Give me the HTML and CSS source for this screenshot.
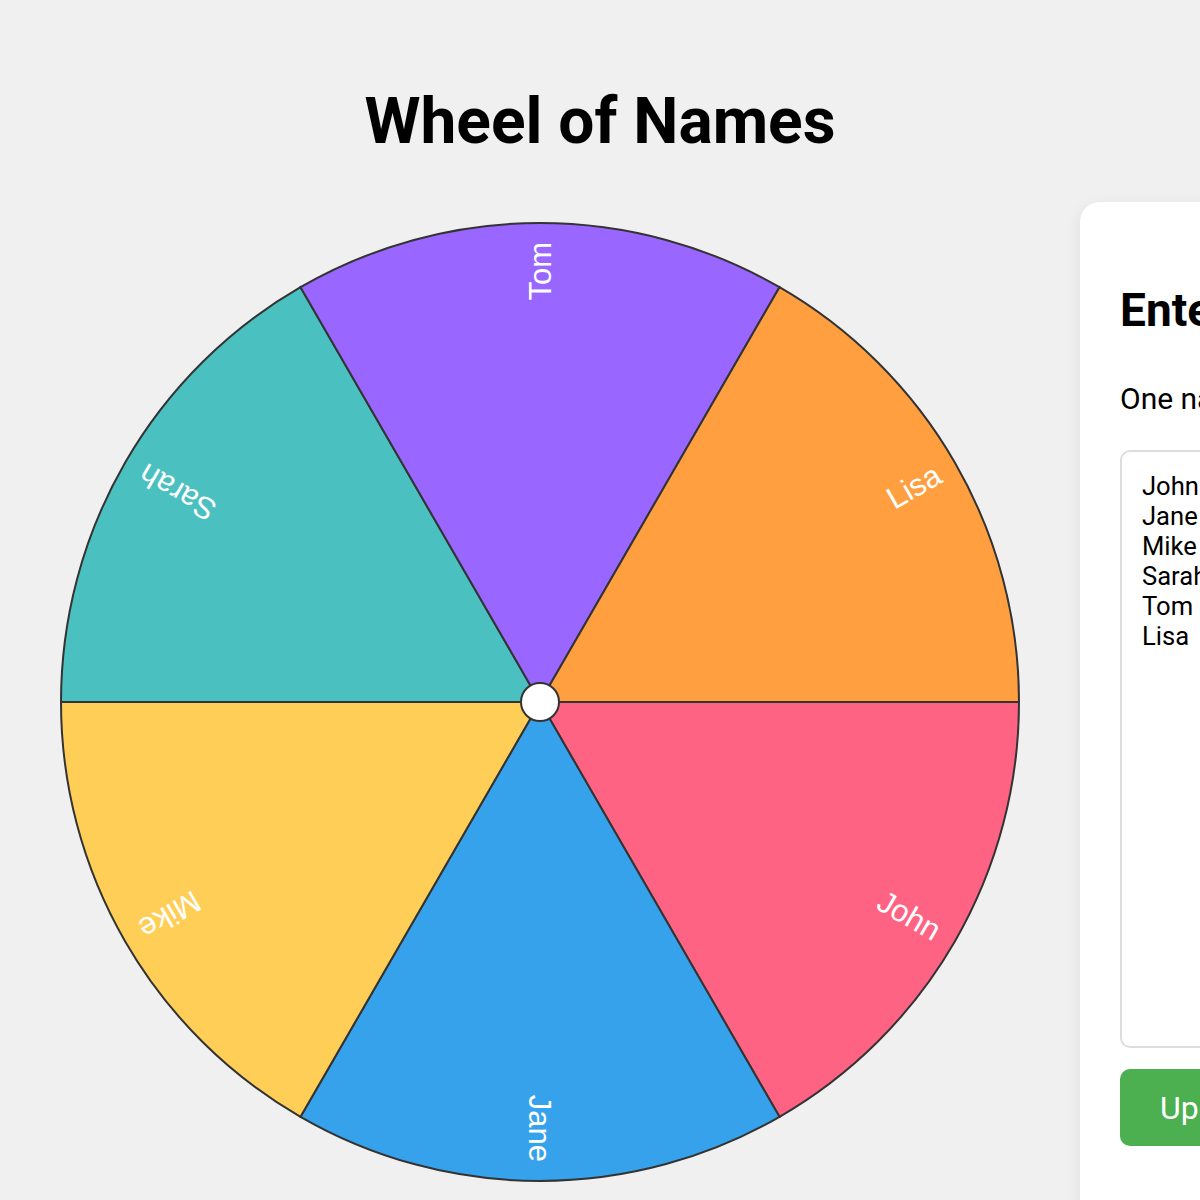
FILE: index.html
```html
<!DOCTYPE html>
<html lang="en">
<head>
    <meta charset="UTF-8">
    <meta name="viewport" content="width=device-width, initial-scale=1.0">
    <title>Wheel of Names</title>
    <link rel="stylesheet" href="styles.css">
</head>
<body>
    <div class="page">
        <h1>Wheel of Names</h1>
        <div class="main-row">
            <div class="wheel-box">
                <!-- wheel drawn as svg, 6 slices of 60 degrees starting at 3 o'clock -->
                <svg class="wheel" width="960" height="960" viewBox="0 0 960 960">
                    <g transform="translate(480 480)" stroke="#333" stroke-width="2">
                        <path d="M0 0 L479 0 A479 479 0 0 1 239.5 414.8 Z" fill="#FF6384"/>
                        <path d="M0 0 L239.5 414.8 A479 479 0 0 1 -239.5 414.8 Z" fill="#36A2EB"/>
                        <path d="M0 0 L-239.5 414.8 A479 479 0 0 1 -479 0 Z" fill="#FFCE56"/>
                        <path d="M0 0 L-479 0 A479 479 0 0 1 -239.5 -414.8 Z" fill="#4BC0C0"/>
                        <path d="M0 0 L-239.5 -414.8 A479 479 0 0 1 239.5 -414.8 Z" fill="#9966FF"/>
                        <path d="M0 0 L239.5 -414.8 A479 479 0 0 1 479 0 Z" fill="#FF9F40"/>
                    </g>
                    <g class="labels" transform="translate(480 480)">
                        <text transform="rotate(30)" x="460" dy="11" text-anchor="end">John</text>
                        <text transform="rotate(90)" x="460" dy="11" text-anchor="end">Jane</text>
                        <text transform="rotate(150)" x="460" dy="11" text-anchor="end">Mike</text>
                        <text transform="rotate(210)" x="460" dy="11" text-anchor="end">Sarah</text>
                        <text transform="rotate(270)" x="460" dy="11" text-anchor="end">Tom</text>
                        <text transform="rotate(330)" x="460" dy="11" text-anchor="end">Lisa</text>
                    </g>
                    <circle cx="480" cy="480" r="19" fill="#fff" stroke="#333" stroke-width="2"/>
                </svg>
            </div>
            <div class="names-panel">
                <h2>Enter Names</h2>
                <p>One name per line</p>
                <textarea id="names-input">John
Jane
Mike
Sarah
Tom
Lisa</textarea>
                <button id="update-btn">Update Wheel</button>
            </div>
        </div>
    </div>
</body>
</html>
```

FILE: styles.css
```css
html, body {
    overflow: hidden;
}

body {
    font-family: 'Roboto', 'Liberation Sans', sans-serif;
    margin: 0;
    padding: 0;
    background-color: #f0f0f0;
}

.page {
    width: 1200px;
    padding-top: 84px;
}

h1 {
    margin: 0;
    font-size: 64px;
    font-weight: 700;
    text-align: center;
    color: #000;
}

.main-row {
    display: flex;
    align-items: flex-start;
    gap: 60px;
    margin-top: 43px;
    padding-left: 60px;
    width: 1800px;
}

.wheel-box {
    margin-top: 20px;
    flex: none;
}

.wheel {
    display: block;
}

.labels text {
    fill: #fff;
    font-family: 'Liberation Sans', Arial, sans-serif;
    font-size: 31px;
}

.names-panel {
    flex: none;
    width: 560px;
    background-color: #fff;
    padding: 81px 40px 80px;
    border-radius: 20px;
    box-shadow: 0 4px 16px rgba(0, 0, 0, 0.08);
}

.names-panel h2 {
    margin: 0 0 44px;
    font-size: 46px;
    font-weight: 700;
}

.names-panel p {
    margin: 0 0 34px;
    font-size: 30px;
}

textarea {
    display: block;
    width: 100%;
    height: 598px;
    box-sizing: border-box;
    padding: 19px 20px;
    border: 2px solid #ddd;
    border-radius: 10px;
    font-family: 'Roboto', sans-serif;
    font-size: 25.6px;
    line-height: 30px;
    color: #000;
    resize: none;
}

button {
    display: block;
    margin-top: 21px;
    padding: 20px 40px 19px;
    background-color: #4CAF50;
    color: white;
    border: none;
    border-radius: 10px;
    font-family: 'Roboto', sans-serif;
    font-size: 32px;
    cursor: pointer;
}

button:hover {
    background-color: #45a049;
}
```
